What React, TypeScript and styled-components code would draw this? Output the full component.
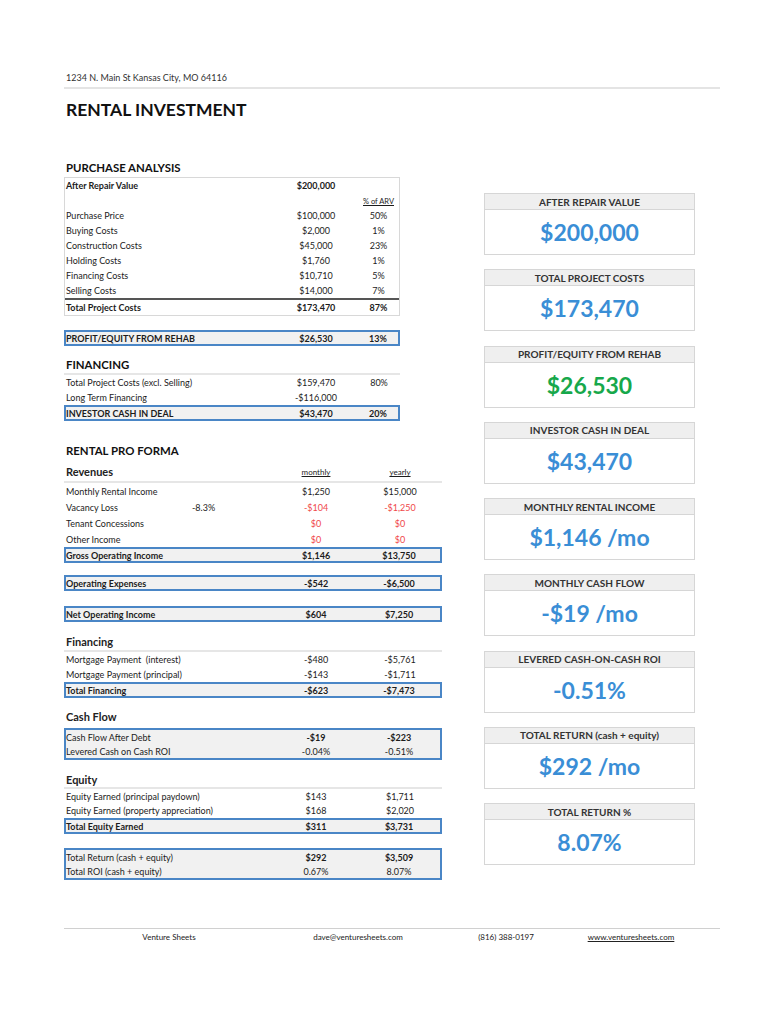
import React from "react";
import styled, { createGlobalStyle } from "styled-components";

const BLUE_BORDER = "#4a86c6";
const RED = "#f0484a";

const GlobalStyle = createGlobalStyle`
  html, body { margin: 0; padding: 0; background: #ffffff; }
  body { font-family: "Lato", "Liberation Sans", sans-serif; color: #1c1c1c; }
  *, *::before, *::after { box-sizing: border-box; }
`;

const Page = styled.div`
  width: 768px;
  min-height: 1024px;
  padding: 72px 48px 0 64px;
`;

const Address = styled.div`
  font-size: 9px;
  line-height: 12px;
  color: #333;
  padding-left: 2px;
`;

const HeadRule = styled.div`
  height: 2px;
  margin-top: 3px;
  background: #e4e4e4;
`;

const Title = styled.h1`
  margin: 10px 0 0;
  padding-left: 2px;
  font-size: 17.5px;
  line-height: 22px;
  font-weight: 700;
  color: #111;
`;

const Main = styled.main`
  display: grid;
  grid-template-columns: 378px 211px;
  column-gap: 42px;
  margin-top: 39px;
  align-items: start;
`;

const LeftCol = styled.section`
  display: flex;
  flex-direction: column;
`;

const RightCol = styled.aside`
  display: flex;
  flex-direction: column;
  gap: 14.25px;
  padding-top: 33px;
`;

const SectionTitle = styled.h2<{ $mt: number }>`
  margin: ${(p) => p.$mt}px 0 0;
  padding-left: 2px;
  font-size: 11.4px;
  line-height: 16px;
  font-weight: 700;
  color: #111;
`;

const SubTitle = styled.h3<{ $mt: number }>`
  margin: ${(p) => p.$mt}px 0 0;
  padding-left: 2px;
  font-size: 11px;
  line-height: 14px;
  font-weight: 700;
  color: #222;
`;

const Rule = styled.div<{ $w: number; $mt?: number }>`
  width: ${(p) => p.$w}px;
  height: 2px;
  margin-top: ${(p) => p.$mt ?? 0}px;
  background: #e6e6e6;
`;

const Table = styled.div`
  width: 336px;
  margin-top: 1px;
  border: 1px solid #d8d8d8;
`;

const Box = styled.div<{ $w: number; $mt: number }>`
  width: ${(p) => p.$w}px;
  margin-top: ${(p) => p.$mt}px;
  border: 2px solid ${BLUE_BORDER};
  background: #f1f1f1;
`;

const Row = styled.div<{
  $cols: string;
  $h: number;
  $pl: number;
  $bold?: boolean;
  $topRule?: boolean;
  $end?: boolean;
}>`
  display: grid;
  grid-template-columns: ${(p) => p.$cols};
  align-items: ${(p) => (p.$end ? "end" : "center")};
  height: ${(p) => p.$h}px;
  font-size: 9px;
  line-height: 11px;
  font-weight: ${(p) => (p.$bold ? 700 : 400)};
  white-space: pre;
  color: #1c1c1c;
  border-top: ${(p) => (p.$topRule ? "2px solid #555" : "none")};
  & > :first-child {
    padding-left: ${(p) => p.$pl}px;
  }
`;

const Cell = styled.span<{
  $center?: boolean;
  $shift?: number;
  $bold?: boolean;
  $red?: boolean;
}>`
  text-align: ${(p) => (p.$center ? "center" : "left")};
  padding-left: ${(p) => p.$shift ?? 0}px;
  font-weight: ${(p) => (p.$bold ? 700 : "inherit")};
  color: ${(p) => (p.$red ? RED : "inherit")};
`;

const ColHead = styled.span<{ $shift?: number; $size: number }>`
  text-align: center;
  padding-left: ${(p) => p.$shift ?? 0}px;
  padding-bottom: 1px;
  font-size: ${(p) => p.$size}px;
  font-weight: 400;
  text-decoration: underline;
  text-underline-offset: 1px;
`;

const RevHead = styled.span`
  font-size: 11px;
  line-height: 14px;
  font-weight: 700;
  color: #222;
  align-self: end;
  padding-bottom: 0;
`;

const Card = styled.div`
  height: 62px;
  display: flex;
  flex-direction: column;
  border: 1px solid #d6d6d6;
`;

const CardHead = styled.div`
  height: 16px;
  flex: none;
  display: flex;
  align-items: center;
  justify-content: center;
  background: #efefef;
  border-bottom: 1px solid #d6d6d6;
  font-size: 10px;
  font-weight: 700;
  color: #333;
`;

const CardValue = styled.div<{ $green?: boolean }>`
  flex: 1;
  display: flex;
  align-items: center;
  justify-content: center;
  font-size: 23px;
  font-weight: 700;
  color: ${(p) => (p.$green ? "#17a84b" : "#3a8ed6")};
`;

const Footer = styled.footer`
  margin-top: 48px;
  width: 656px;
  border-top: 1px solid #d0d0d0;
  display: grid;
  grid-template-columns: 210px 168px 128px 122px;
  padding-top: 2px;
  font-size: 8px;
  line-height: 12px;
  color: #222;
`;

const FootItem = styled.span<{ $link?: boolean }>`
  text-align: center;
  text-decoration: ${(p) => (p.$link ? "underline" : "none")};
`;

const PA_T = "215px 72px 47px";
const PA_R = "216px 72px 48px";
const PA_B = "214px 72px 46px";
const PF_R = "128px 88px 72px 90px";
const PF_B = "126px 88px 72px 88px";

type PFProps = {
  label: string;
  note?: string;
  m: string;
  y: string;
  h: number;
  box?: boolean;
  bold?: boolean;
  valBold?: boolean;
  red?: boolean;
};

const PFRow = ({ label, note, m, y, h, box, bold, valBold, red }: PFProps) => (
  <Row $cols={box ? PF_B : PF_R} $h={h} $pl={box ? 0 : 2} $bold={bold}>
    <Cell>{label}</Cell>
    <Cell>{note ?? ""}</Cell>
    <Cell $center $bold={valBold} $red={red}>
      {m}
    </Cell>
    <Cell $center $shift={6} $bold={valBold} $red={red}>
      {y}
    </Cell>
  </Row>
);

const cards: { head: string; value: string; green?: boolean }[] = [
  { head: "AFTER REPAIR VALUE", value: "$200,000" },
  { head: "TOTAL PROJECT COSTS", value: "$173,470" },
  { head: "PROFIT/EQUITY FROM REHAB", value: "$26,530", green: true },
  { head: "INVESTOR CASH IN DEAL", value: "$43,470" },
  { head: "MONTHLY RENTAL INCOME", value: "$1,146 /mo" },
  { head: "MONTHLY CASH FLOW", value: "-$19 /mo" },
  { head: "LEVERED CASH-ON-CASH ROI", value: "-0.51%" },
  { head: "TOTAL RETURN (cash + equity)", value: "$292 /mo" },
  { head: "TOTAL RETURN %", value: "8.07%" },
];

const purchaseRows: [string, string, string][] = [
  ["Purchase Price", "$100,000", "50%"],
  ["Buying Costs", "$2,000", "1%"],
  ["Construction Costs", "$45,000", "23%"],
  ["Holding Costs", "$1,760", "1%"],
  ["Financing Costs", "$10,710", "5%"],
  ["Selling Costs", "$14,000", "7%"],
];

export default function App() {
  return (
    <Page>
      <GlobalStyle />
      <Address>1234 N. Main St Kansas City, MO 64116</Address>
      <HeadRule />
      <Title>RENTAL INVESTMENT</Title>

      <Main>
        <LeftCol>
          <SectionTitle $mt={0}>PURCHASE ANALYSIS</SectionTitle>
          <Table>
            <Row $cols={PA_T} $h={15} $pl={1} $bold>
              <Cell>After Repair Value</Cell>
              <Cell $center>$200,000</Cell>
              <Cell />
            </Row>
            <Row $cols={PA_T} $h={15} $pl={1} $end>
              <Cell />
              <Cell />
              <ColHead $shift={6} $size={7.5}>
                % of ARV
              </ColHead>
            </Row>
            {purchaseRows.map(([l, v, p]) => (
              <Row key={l} $cols={PA_T} $h={15} $pl={1}>
                <Cell>{l}</Cell>
                <Cell $center>{v}</Cell>
                <Cell $center $shift={6}>
                  {p}
                </Cell>
              </Row>
            ))}
            <Row $cols={PA_T} $h={17} $pl={1} $bold $topRule>
              <Cell>Total Project Costs</Cell>
              <Cell $center>$173,470</Cell>
              <Cell $center $shift={6}>
                87%
              </Cell>
            </Row>
          </Table>

          <Box $w={336} $mt={14}>
            <Row $cols={PA_B} $h={12} $pl={0} $bold>
              <Cell>PROFIT/EQUITY FROM REHAB</Cell>
              <Cell $center>$26,530</Cell>
              <Cell $center $shift={6}>
                13%
              </Cell>
            </Row>
          </Box>

          <SectionTitle $mt={11}>FINANCING</SectionTitle>
          <Rule $w={336} />
          <Row $cols={PA_R} $h={15} $pl={2}>
            <Cell>Total Project Costs (excl. Selling)</Cell>
            <Cell $center>$159,470</Cell>
            <Cell $center $shift={6}>
              80%
            </Cell>
          </Row>
          <Row $cols={PA_R} $h={15} $pl={2}>
            <Cell>Long Term Financing</Cell>
            <Cell $center>-$116,000</Cell>
            <Cell />
          </Row>
          <Box $w={336} $mt={0}>
            <Row $cols={PA_B} $h={12} $pl={0} $bold>
              <Cell>INVESTOR CASH IN DEAL</Cell>
              <Cell $center>$43,470</Cell>
              <Cell $center $shift={6}>
                20%
              </Cell>
            </Row>
          </Box>

          <SectionTitle $mt={22}>RENTAL PRO FORMA</SectionTitle>
          <Row $cols={PF_R} $h={20} $pl={2} $end>
            <RevHead>Revenues</RevHead>
            <Cell />
            <ColHead $size={8}>monthly</ColHead>
            <ColHead $shift={6} $size={8}>
              yearly
            </ColHead>
          </Row>
          <Rule $w={378} $mt={2} />
          <PFRow label="Monthly Rental Income" m="$1,250" y="$15,000" h={16} />
          <PFRow label="Vacancy Loss" note="-8.3%" m="-$104" y="-$1,250" h={16} red />
          <PFRow label="Tenant Concessions" m="$0" y="$0" h={16} red />
          <PFRow label="Other Income" m="$0" y="$0" h={16} red />
          <Box $w={378} $mt={0}>
            <PFRow label="Gross Operating Income" m="$1,146" y="$13,750" h={12} box bold />
          </Box>
          <Box $w={378} $mt={12}>
            <PFRow label="Operating Expenses" m="-$542" y="-$6,500" h={12} box bold />
          </Box>
          <Box $w={378} $mt={15}>
            <PFRow label="Net Operating Income" m="$604" y="$7,250" h={12} box bold />
          </Box>

          <SubTitle $mt={13}>Financing</SubTitle>
          <Rule $w={378} $mt={1} />
          <PFRow label="Mortgage Payment  (interest)" m="-$480" y="-$5,761" h={15} />
          <PFRow label="Mortgage Payment (principal)" m="-$143" y="-$1,711" h={15} />
          <Box $w={378} $mt={0}>
            <PFRow label="Total Financing" m="-$623" y="-$7,473" h={12} box bold />
          </Box>

          <SubTitle $mt={12}>Cash Flow</SubTitle>
          <Box $w={378} $mt={4}>
            <PFRow label="Cash Flow After Debt" m="-$19" y="-$223" h={14} box valBold />
            <PFRow label="Levered Cash on Cash ROI" m="-0.04%" y="-0.51%" h={14} box />
          </Box>

          <SubTitle $mt={13}>Equity</SubTitle>
          <Rule $w={378} />
          <PFRow label="Equity Earned (principal paydown)" m="$143" y="$1,711" h={14.5} />
          <PFRow label="Equity Earned (property appreciation)" m="$168" y="$2,020" h={14.5} />
          <Box $w={378} $mt={0}>
            <PFRow label="Total Equity Earned" m="$311" y="$3,731" h={12} box bold />
          </Box>

          <Box $w={378} $mt={14}>
            <PFRow label="Total Return (cash + equity)" m="$292" y="$3,509" h={14} box valBold />
            <PFRow label="Total ROI (cash + equity)" m="0.67%" y="8.07%" h={14} box />
          </Box>
        </LeftCol>

        <RightCol>
          {cards.map((c) => (
            <Card key={c.head}>
              <CardHead>{c.head}</CardHead>
              <CardValue $green={c.green}>{c.value}</CardValue>
            </Card>
          ))}
        </RightCol>
      </Main>

      <Footer>
        <FootItem>Venture Sheets</FootItem>
        <FootItem>dave@venturesheets.com</FootItem>
        <FootItem>(816) 388-0197</FootItem>
        <FootItem $link>www.venturesheets.com</FootItem>
      </Footer>
    </Page>
  );
}
